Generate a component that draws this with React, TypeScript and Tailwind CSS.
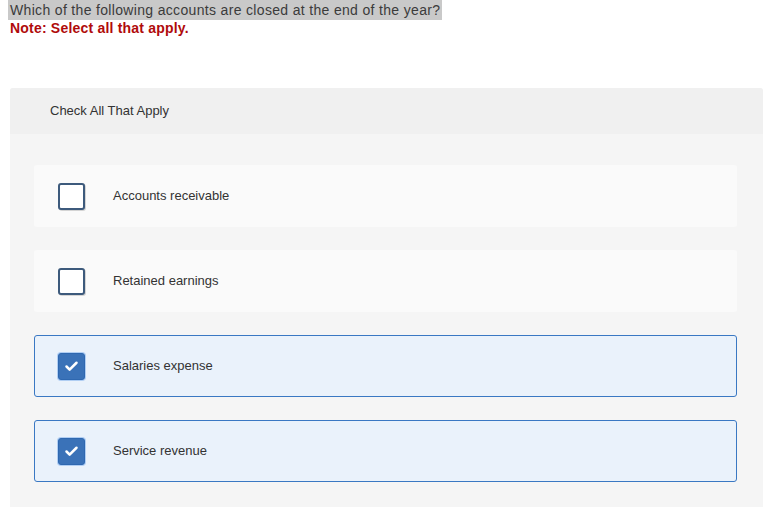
import { Check } from "lucide-react";

type Option = {
  label: string;
  checked: boolean;
};

const options: Option[] = [
  { label: "Accounts receivable", checked: false },
  { label: "Retained earnings", checked: false },
  { label: "Salaries expense", checked: true },
  { label: "Service revenue", checked: true },
];

function OptionRow({ label, checked }: Option) {
  return (
    <div
      className={
        checked
          ? "flex h-[62px] items-center rounded-[3px] border border-[#3a78c3] bg-[#eaf2fb] pl-[23px]"
          : "flex h-[62px] items-center rounded-[3px] border border-transparent bg-[#fafafa] pl-[23px]"
      }
    >
      {checked ? (
        <div className="flex size-[27px] items-center justify-center rounded-[3px] border border-[#2f68b0] bg-[#3a72b8] shadow-[0_0_0_1px_rgba(70,140,230,0.35)]">
          <Check className="size-[15px] text-white" strokeWidth={4} />
        </div>
      ) : (
        <div className="size-[27px] rounded-[3px] border-2 border-[#3d5a7c] bg-white shadow-[1px_1px_0_rgba(0,0,0,0.15)]" />
      )}
      <span className="ml-[28px] text-[13px] text-[#333]">{label}</span>
    </div>
  );
}

export default function App() {
  return (
    <div className="min-h-screen bg-white font-['Liberation_Sans',Arial,sans-serif]">
      <div className="flex flex-col items-start px-[8px]">
        <p className="bg-[#c9c9c9] px-[2px] text-[14px] leading-[20px] tracking-[0.33px] text-[#3b3b3b]">
          Which of the following accounts are closed at the end of the year?
        </p>
        <p className="px-[2px] text-[14px] font-bold leading-[16px] tracking-[0.2px] text-[#b00b0b]">
          Note: Select all that apply.
        </p>
      </div>

      <div className="mt-[52px] ml-[10px] mr-[8px] rounded-t-[3px] bg-[#f5f5f5]">
        <div className="flex h-[46px] items-center rounded-t-[3px] bg-[#f0f0f0] pl-[40px] text-[13px] text-[#333]">
          Check All That Apply
        </div>
        <div className="flex flex-col gap-[23px] pl-[24px] pr-[26px] pt-[31px] pb-[27px]">
          {options.map((option) => (
            <OptionRow key={option.label} {...option} />
          ))}
        </div>
      </div>
    </div>
  );
}
